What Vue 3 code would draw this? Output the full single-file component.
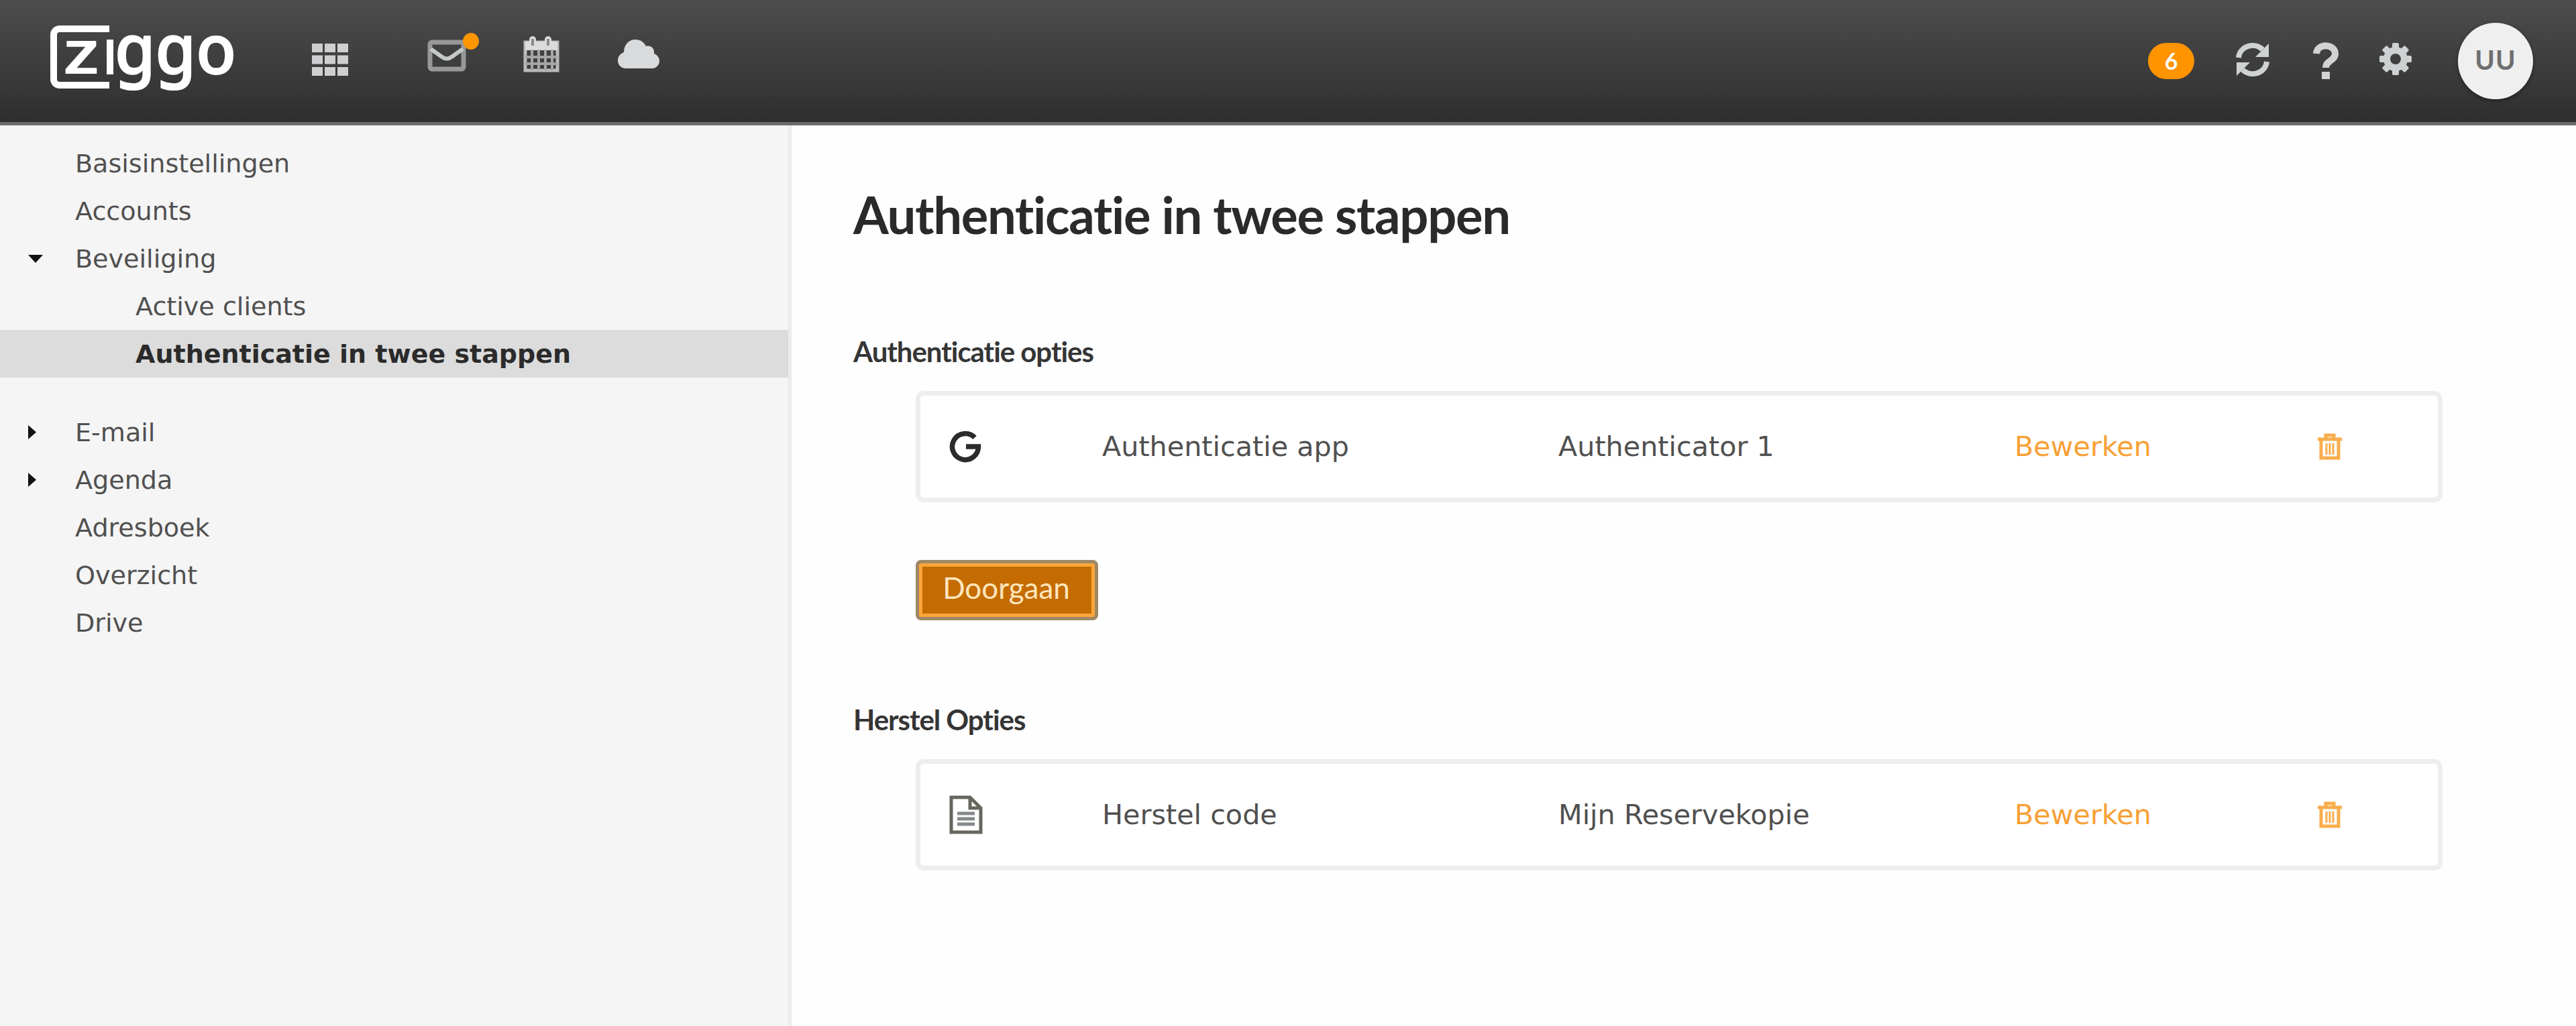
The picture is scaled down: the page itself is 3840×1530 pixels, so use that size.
<template>
  <div class="page">
    <header class="topbar">
      <svg class="logo" viewBox="0 0 290 110" width="290" height="110">
        <path d="M94 13H20a9 9 0 0 0-9 9v66a9 9 0 0 0 9 9h74" fill="none" stroke="#fff" stroke-width="10" />
        <path d="M95 29v52" stroke="#fff" stroke-width="10" />
        <text x="25" y="80" textLength="54" lengthAdjust="spacingAndGlyphs" class="logo-z">z</text>
        <text x="102" y="80" textLength="181" lengthAdjust="spacingAndGlyphs">ggo</text>
      </svg>
      <nav class="apps">
        <svg class="app-grid" viewBox="0 0 54 48" width="54" height="48" fill="#cfcfd2">
          <template v-for="r in 3" :key="r">
            <rect v-for="c in 3" :key="c" :x="(c - 1) * 19" :y="(r - 1) * 17.5" width="16" height="13" />
          </template>
        </svg>
        <div class="app-mail">
          <svg viewBox="0 0 58 48" width="58" height="48" fill="none">
            <rect x="4" y="4" width="50" height="40" rx="3" stroke="#989898" stroke-width="7" />
            <path d="M5 14l17 12q7 5 14 0l17-12" stroke="#c4c8c8" stroke-width="6" />
          </svg>
          <span class="dot"></span>
        </div>
        <svg class="app-calendar" viewBox="0 0 54 54" width="54" height="54">
          <path d="M3 9h48v42H3z" fill="none" stroke="#b9baba" stroke-width="5" />
          <path d="M3 8h48v13H3z" fill="#dcdcdc" />
          <path d="M13 20v31M23 20v31M33 20v31M43 20v31M3 31h48M3 41h48" stroke="#a5a5a5" stroke-width="4" />
          <path d="M14 5v7M37 5v7" stroke="#dcdcdc" stroke-width="10" stroke-linecap="round" />
          <path d="M14 4v10M37 4v10" stroke="#8b8b8b" stroke-width="4" />
        </svg>
        <svg class="app-cloud" viewBox="0 0 62 44" width="62" height="44">
          <path d="M12 43C4 43 0 37 0 31c0-6 4-10 9-12C9 8 16 0 26 0c8 0 13 4 16 10 7-2 13 3 12 11 5 2 8 6 8 11 0 6-5 11-11 11z" fill="#d9dadb" />
        </svg>
      </nav>
      <div class="tools">
        <span class="count">6</span>
        <svg class="refresh" viewBox="0 0 54 52" width="54" height="52">
          <path d="M6 23a21 20 0 0 1 36-12M48 29a21 20 0 0 1-36 12" fill="none" stroke="#cfd2d3" stroke-width="8" />
          <path d="M51 2v20H31zM3 50V30h20z" fill="#cfd2d3" />
        </svg>
        <svg class="help" viewBox="0 0 38 56" width="38" height="56">
          <path d="M5 17C6 1 33 2 33 17c0 11-14 10-14 21" fill="none" stroke="#d2d2d2" stroke-width="10" />
          <path d="M13 44h12v11H13z" fill="#d2d2d2" />
        </svg>
        <svg class="gear" viewBox="-24 -24 48 48" width="48" height="48">
          <rect v-for="a in 8" :key="a" x="-5" y="-24" width="10" height="12" rx="2" fill="#cdd1d2" :transform="`rotate(${a * 45})`" />
          <circle r="13" fill="none" stroke="#cdd1d2" stroke-width="10" />
        </svg>
        <span class="avatar">UU</span>
      </div>
    </header>

    <div class="body">
      <aside class="sidebar">
        <div
          v-for="item in menu"
          :key="item.label"
          class="item"
          :class="{ sub: item.sub, active: item.active }"
        >
          <span class="arrow">
            <svg v-if="item.arrow === 'down'" viewBox="0 0 22 12" width="22" height="12"><path d="M0 0h22L11 12z" /></svg>
            <svg v-if="item.arrow === 'right'" viewBox="0 0 12 21" width="12" height="21"><path d="M0 0v21l12-10.500z" /></svg>
          </span>
          <span class="label">{{ item.label }}</span>
        </div>
      </aside>

      <main class="content">
        <h1>Authenticatie in twee stappen</h1>
        <section v-for="s in sections" :key="s.title" class="section">
          <h2 :class="s.icon">{{ s.title }}</h2>
          <div class="card">
            <div class="icon">
              <svg v-if="s.icon === 'google'" viewBox="0 0 48 48" width="48" height="48">
                <path d="M38 10.500A19.500 19.500 0 1 0 43.500 24H25" fill="none" stroke="#2b2b2b" stroke-width="7.500" />
              </svg>
              <svg v-else viewBox="0 0 50 58" width="50" height="58" fill="none" stroke="#66665f" stroke-width="5">
                <path d="M3 3h28l16 16v36H3zM31 3v16h16" />
                <path d="M12 27h26M12 35h26M12 43h26" stroke="#858a8a" />
              </svg>
            </div>
            <span>{{ s.type }}</span>
            <span>{{ s.name }}</span>
            <a class="edit">Bewerken</a>
            <svg class="trash" viewBox="0 0 36 40" width="36" height="40" fill="none" stroke="#f8ad4c" stroke-width="5">
              <path d="M0 9h36M12 8V3h12v5M5 10v27h26V10" />
              <path d="M13 15v17M18 15v17M23 15v17" stroke-width="3" />
            </svg>
          </div>
          <button v-if="s.button" class="next">{{ s.button }}</button>
        </section>
      </main>
    </div>
  </div>
</template>

<script setup>
const menu = [
  { label: 'Basisinstellingen' },
  { label: 'Accounts' },
  { label: 'Beveiliging', arrow: 'down' },
  { label: 'Active clients', sub: true },
  { label: 'Authenticatie in twee stappen', sub: true, active: true },
  { label: 'E-mail', arrow: 'right' },
  { label: 'Agenda', arrow: 'right' },
  { label: 'Adresboek' },
  { label: 'Overzicht' },
  { label: 'Drive' },
];

const sections = [
  { title: 'Authenticatie opties', icon: 'google', type: 'Authenticatie app', name: 'Authenticator 1', button: 'Doorgaan' },
  { title: 'Herstel Opties', icon: 'file', type: 'Herstel code', name: 'Mijn Reservekopie' },
];
</script>

<style>
body { margin: 0; background: #fff; }
</style>

<style scoped>
.page { width: 3840px; height: 1530px; overflow: hidden; display: flex; flex-direction: column; background: #fefefe; font-family: "DejaVu Sans", sans-serif; color: #505050; }
.topbar { height: 187px; box-sizing: border-box; flex: none; display: flex; align-items: flex-start; border-bottom: 5px solid #6c6c6a; background: linear-gradient(#4d4d4d, #424242 35%, #3e3e3e 50%, #2e2e2e); }
.logo { margin: 30px 0 0 69px; font-family: "Noto Sans", sans-serif; font-weight: 500; font-size: 102px; fill: #fff; overflow: visible; }
.logo text { stroke: #fff; stroke-width: 2px; }
.logo .logo-z { font-weight: 600; font-size: 90px; stroke-width: 0; }
.apps { display: flex; align-items: flex-start; }
.app-grid { margin: 65px 0 0 106px; }
.app-mail { position: relative; margin: 59px 0 0 118px; height: 48px; }
.dot { position: absolute; left: 53px; top: -10px; width: 24px; height: 25px; border-radius: 50%; background: #ff9600; }
.app-calendar { margin: 54px 0 0 85px; }
.app-cloud { margin: 59px 0 0 87px; }
.tools { margin-left: auto; display: flex; align-items: flex-start; padding-right: 64px; }
.count { margin-top: 64px; width: 69px; height: 54px; border-radius: 27px; background: #ff9300; color: #fff; font: 700 34px/54px Lato, sans-serif; text-align: center; }
.refresh { margin: 63px 0 0 60px; }
.help { margin: 63px 0 0 63px; }
.gear { margin: 64px 0 0 61px; }
.avatar { margin: 34px 0 0 69px; width: 112px; height: 114px; border-radius: 50%; background: #efefef; box-shadow: 0 2px 5px #1f1f1f; color: #6e6e6e; text-align: center; font: 700 40px/111px Lato, sans-serif; letter-spacing: 1px; }

.body { flex: 1; display: flex; }
.sidebar { width: 1180px; flex: none; box-sizing: border-box; border-right: 5px solid #ececec; background: #f5f5f5; padding-top: 21px; }
.item { height: 71px; display: flex; align-items: center; font-size: 38.100px; white-space: nowrap; }
.arrow { width: 112px; box-sizing: border-box; padding-left: 42px; display: flex; fill: #111; }
.sub .label { padding-left: 90px; }
.active { background: #dcdcdc; color: #2b2b2b; font-weight: 700; font-size: 38px; margin-bottom: 46px; }

.content { flex: 1; padding: 87px 0 0 92px; }
h1, h2 { margin: 0; font-family: Lato, sans-serif; color: #2a2a2a; white-space: nowrap; }
h1 { font-size: 76px; line-height: 92px; letter-spacing: -1.300px; }
h2 { font-size: 42px; line-height: 52px; letter-spacing: -1.050px; margin-top: 132px; color: #353535; }
h2.file { margin-top: 122px; }
.card { margin: 33px 0 0 93px; width: 2276px; height: 166px; box-sizing: border-box; border: 7px solid #eee; border-radius: 12px; background: #fff; display: grid; grid-template-columns: 228px 680px 680px 452px auto; align-items: center; padding-left: 43px; font-size: 41.300px; }
.icon { display: flex; }
.edit { color: #f7a035; }
.next { display: block; margin: 86px 0 0 93px; width: 272px; height: 90px; border: 5px solid #9e8867; border-radius: 8px; background: #c46c02; box-shadow: inset 0 0 0 5px #ffa63a; color: #ffe6bc; font: 400 44px Lato, sans-serif; padding: 0 2px 8px 0; }
</style>
